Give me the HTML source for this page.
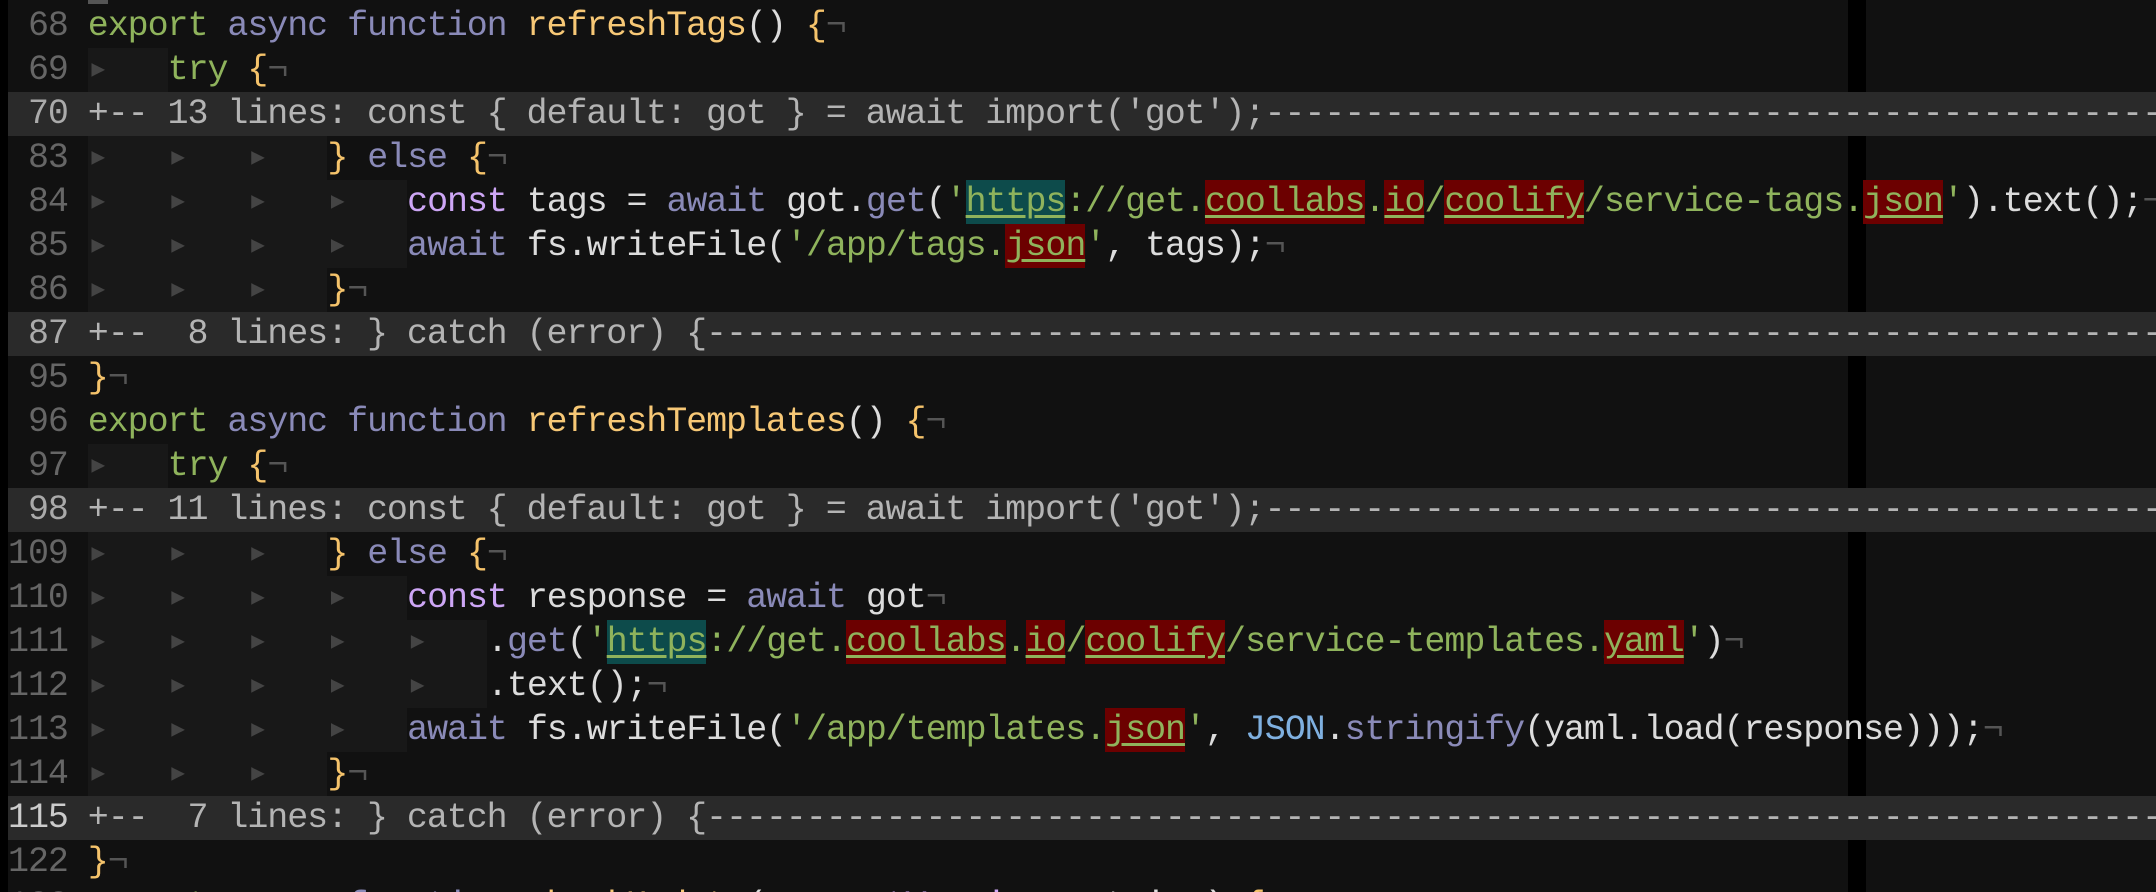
<!DOCTYPE html>
<html><head><meta charset="utf-8">
<style>
html,body{margin:0;padding:0;width:2156px;height:892px;overflow:hidden;background:#111;}
#wrap{position:absolute;left:0;top:0;width:2156px;height:892px;overflow:hidden;background:#111;font-family:"Liberation Mono","DejaVu Sans Mono",monospace;font-size:35px;letter-spacing:-1.06px;color:#dcdcdc;}
#lm{position:absolute;left:0;top:0;width:8px;height:892px;background:#000;}
#cc{position:absolute;left:1848px;top:0;width:18px;height:892px;background:#000;z-index:1;}
#rt{position:absolute;left:1866px;top:0;width:290px;height:892px;background:#111;z-index:1;}
.l{position:absolute;left:8px;height:44px;line-height:44px;white-space:pre;z-index:2;width:2148px;overflow:hidden;}
.fold{background:#2a2a2a;color:#b4b4b4;z-index:3;}
.n{color:#666;}
.fold .n{color:#aaa;}
.g{color:#8fb35c;}
.k{color:#8a8ab8;}
.c{color:#cda6f5;}
.f{color:#f7c876;}
.y{color:#f5c36b;}
.j{color:#7fb0e0;}
.p{color:#555;}
.t{display:inline-block;height:44px;background:#181818;color:#444;}
.e{display:inline-block;height:44px;background:#6c0000;color:#8fb35c;text-decoration:underline;text-decoration-thickness:3px;text-underline-offset:4px;}
.h{display:inline-block;height:44px;background:#0d4b4b;color:#8fb35c;text-decoration:underline;text-decoration-thickness:3px;text-underline-offset:4px;}
#cur{position:absolute;left:88px;top:0;width:20px;height:4px;background:#555;z-index:2;}
</style></head><body>
<div id="wrap">
<div id="lm"></div>
<div id="cc"></div>
<div id="rt"></div>
<div id="cur"></div>
<div class="l" style="top:4px"><span class="n"> 68 </span><span class="g">export</span> <span class="k">async</span> <span class="k">function</span> <span class="f">refreshTags</span>() <span class="y">{</span><span class="p">¬</span></div>
<div class="l" style="top:48px"><span class="n"> 69 </span><span class="t">▸   </span><span class="g">try</span> <span class="y">{</span><span class="p">¬</span></div>
<div class="l fold" style="top:92px"><span class="n"> 70 </span>+-- 13 lines: const { default: got } = await import('got');--------------------------------------------------------------------------------</div>
<div class="l" style="top:136px"><span class="n"> 83 </span><span class="t">▸   ▸   ▸   </span><span class="y">}</span> <span class="k">else</span> <span class="y">{</span><span class="p">¬</span></div>
<div class="l" style="top:180px"><span class="n"> 84 </span><span class="t">▸   ▸   ▸   ▸   </span><span class="c">const</span> tags = <span class="k">await</span> got.<span class="k">get</span>(<span class="g">'</span><span class="h">https</span><span class="g">://get.</span><span class="e">coollabs</span><span class="g">.</span><span class="e">io</span><span class="g">/</span><span class="e">coolify</span><span class="g">/service-tags.</span><span class="e">json</span><span class="g">'</span>).text();<span class="p">¬</span></div>
<div class="l" style="top:224px"><span class="n"> 85 </span><span class="t">▸   ▸   ▸   ▸   </span><span class="k">await</span> fs.writeFile(<span class="g">'/app/tags.</span><span class="e">json</span><span class="g">'</span>, tags);<span class="p">¬</span></div>
<div class="l" style="top:268px"><span class="n"> 86 </span><span class="t">▸   ▸   ▸   </span><span class="y">}</span><span class="p">¬</span></div>
<div class="l fold" style="top:312px"><span class="n"> 87 </span>+--  8 lines: } catch (error) {----------------------------------------------------------------------------------------------------</div>
<div class="l" style="top:356px"><span class="n"> 95 </span><span class="y">}</span><span class="p">¬</span></div>
<div class="l" style="top:400px"><span class="n"> 96 </span><span class="g">export</span> <span class="k">async</span> <span class="k">function</span> <span class="f">refreshTemplates</span>() <span class="y">{</span><span class="p">¬</span></div>
<div class="l" style="top:444px"><span class="n"> 97 </span><span class="t">▸   </span><span class="g">try</span> <span class="y">{</span><span class="p">¬</span></div>
<div class="l fold" style="top:488px"><span class="n"> 98 </span>+-- 11 lines: const { default: got } = await import('got');--------------------------------------------------------------------------------</div>
<div class="l" style="top:532px"><span class="n">109 </span><span class="t">▸   ▸   ▸   </span><span class="y">}</span> <span class="k">else</span> <span class="y">{</span><span class="p">¬</span></div>
<div class="l" style="top:576px"><span class="n">110 </span><span class="t">▸   ▸   ▸   ▸   </span><span class="c">const</span> response = <span class="k">await</span> got<span class="p">¬</span></div>
<div class="l" style="top:620px"><span class="n">111 </span><span class="t">▸   ▸   ▸   ▸   ▸   </span>.<span class="k">get</span>(<span class="g">'</span><span class="h">https</span><span class="g">://get.</span><span class="e">coollabs</span><span class="g">.</span><span class="e">io</span><span class="g">/</span><span class="e">coolify</span><span class="g">/service-templates.</span><span class="e">yaml</span><span class="g">'</span>)<span class="p">¬</span></div>
<div class="l" style="top:664px"><span class="n">112 </span><span class="t">▸   ▸   ▸   ▸   ▸   </span>.text();<span class="p">¬</span></div>
<div class="l" style="top:708px"><span class="n">113 </span><span class="t">▸   ▸   ▸   ▸   </span><span class="k">await</span> fs.writeFile(<span class="g">'/app/templates.</span><span class="e">json</span><span class="g">'</span>, <span class="j">JSON</span>.<span class="k">stringify</span>(yaml.load(response)));<span class="p">¬</span></div>
<div class="l" style="top:752px"><span class="n">114 </span><span class="t">▸   ▸   ▸   </span><span class="y">}</span><span class="p">¬</span></div>
<div class="l fold" style="top:796px"><span class="n" style="color:#ccc">115 </span>+--  7 lines: } catch (error) {----------------------------------------------------------------------------------------------------</div>
<div class="l" style="top:840px"><span class="n">122 </span><span class="y">}</span><span class="p">¬</span></div>
<div class="l" style="top:884px"><span class="n">123 </span><span class="g">export</span> <span class="k">async</span> <span class="k">function</span> <span class="f">checkUpdate</span>(<span class="c">currentVersion</span>: string) <span class="y">{</span><span class="p">¬</span></div>
</div>
</body></html>
